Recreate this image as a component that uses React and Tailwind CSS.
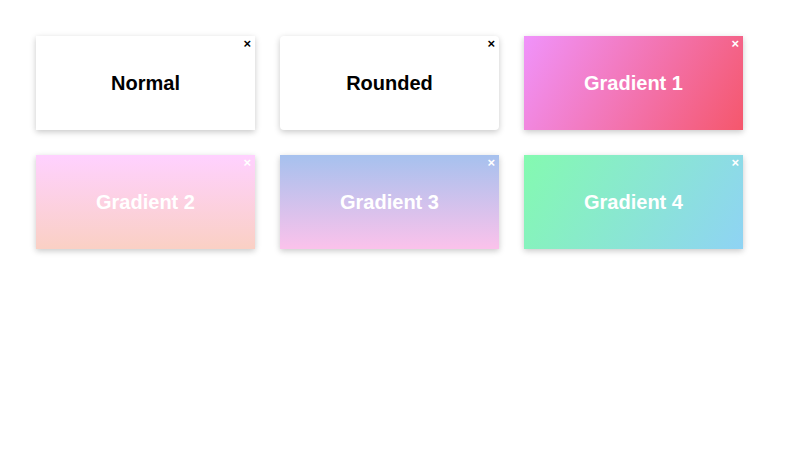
const cards = [
  { label: 'Normal', box: 'bg-white', text: 'text-black', close: 'text-black' },
  { label: 'Rounded', box: 'bg-white rounded', text: 'text-black', close: 'text-black' },
  { label: 'Gradient 1', box: 'bg-[linear-gradient(120deg,#f093fb,#f5576c)]', text: 'text-white', close: 'text-white' },
  { label: 'Gradient 2', box: 'bg-[linear-gradient(to_top,#fad0c4,#ffd1ff)]', text: 'text-white', close: 'text-white' },
  { label: 'Gradient 3', box: 'bg-[linear-gradient(to_top,#fbc2eb,#a6c1ee)]', text: 'text-white', close: 'text-white' },
  { label: 'Gradient 4', box: 'bg-[linear-gradient(120deg,#84fab0,#8fd3f4)]', text: 'text-white', close: 'text-white' },
];

const Card = ({ label, box, text, close }) => (
  <div className={`relative w-[219px] h-[94px] flex items-center justify-center shadow-[0_2px_6px_rgba(0,0,0,0.22)] ${box}`}>
    <span className={`text-[20px] font-bold ${text}`}>{label}</span>
    <span className={`absolute top-0 right-[4px] text-[13px] font-bold leading-[16px] ${close}`}>×</span>
  </div>
);

const App = () => (
  <div className="w-[800px] h-[450px] bg-white font-['Liberation_Sans',Arial,sans-serif]">
    <div className="pt-9 pl-9 grid grid-cols-[219px_219px_219px] gap-x-[25px] gap-y-[25px]">
      {cards.map((c) => (
        <Card key={c.label} {...c} />
      ))}
    </div>
  </div>
);

export default App;
